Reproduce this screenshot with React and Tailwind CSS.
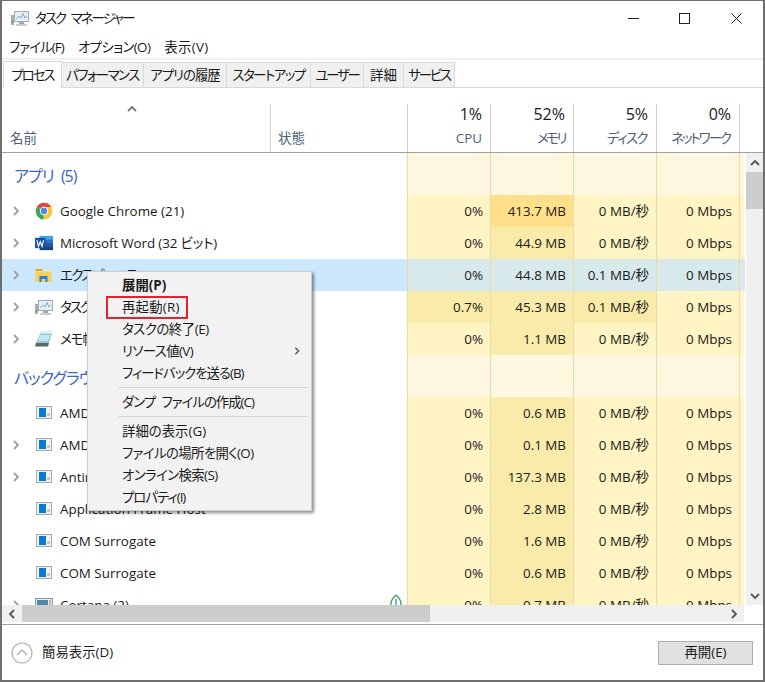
import React from 'react';

const font = '[font-family:"Open_Sans","Noto_Sans_CJK_JP",sans-serif] [font-feature-settings:"palt"]';

const heat = {
    a: 'bg-[#fff4c4]',
    b: 'bg-[#f9ecab]',
    c: 'bg-[#ffe08a]',
    s: 'bg-[#d8e9ec]',
};

const ChromeIcon = () => (
    <svg width="18" height="18" viewBox="0 0 17 17">
        <path d="M8.5 8.5 L1.6 4.8 A8 8 0 0 1 15.5 4.7 L8.5 4.7 Z" fill="#e04a3a" />
        <path d="M8.5 8.5 L8.5 4.7 L15.5 4.7 A8 8 0 0 1 8 16.5 Z" fill="#f8c73a" />
        <path d="M8.5 8.5 L8 16.5 A8 8 0 0 1 1.6 4.8 Z" fill="#3aa757" />
        <circle cx="8.5" cy="8.5" r="3.9" fill="#fff" />
        <circle cx="8.5" cy="8.5" r="3" fill="#4a88e8" />
    </svg>
);

const WordIcon = () => (
    <svg width="18" height="16" viewBox="0 0 19 17">
        <rect x="5" y="1" width="14" height="15" fill="#2b6fc4" />
        <rect x="5" y="1" width="14" height="4" fill="#41a5ee" />
        <rect x="5" y="9" width="14" height="3.5" fill="#1f57a8" />
        <rect x="5" y="12.5" width="14" height="3.5" fill="#17407f" />
        <rect x="0" y="3" width="11" height="11" fill="#1d4f9e" />
        <path d="M2 5.5 L3.6 12 L5.5 7 L7.4 12 L9 5.5" fill="none" stroke="#fff" strokeWidth="1.2" />
    </svg>
);

const FolderIcon = () => (
    <svg width="17" height="15" viewBox="0 0 16 15">
        <path d="M0 1 H6 L7.5 3 H16 V14 H0 Z" fill="#f7cf5c" />
        <rect x="0" y="1" width="7" height="2" fill="#e0a92c" />
        <rect x="0" y="3" width="16" height="1" fill="#fbe08a" />
        <rect x="4" y="8" width="8" height="6" fill="#2a7fd0" />
        <rect x="6" y="11" width="4" height="3" fill="#f7cf5c" />
    </svg>
);

const MonitorIcon = () => (
    <svg width="18" height="17" viewBox="0 0 18 17">
        <rect x="3.5" y="1.5" width="14" height="10" fill="#e6eef4" stroke="#a3a9ae" />
        <path d="M5 9 L8 6 L10 8 L12 3.5 L14 8 L16 6" fill="none" stroke="#6fb0e0" />
        <rect x="0" y="5" width="3" height="10" fill="#a9aeb2" />
        <rect x="0.5" y="11" width="2" height="2" fill="#5fb04c" />
        <rect x="8" y="12" width="5" height="2" fill="#a3a8ad" />
        <rect x="5" y="14" width="11" height="2" fill="#c9cdd0" />
    </svg>
);

const NotepadIcon = () => (
    <svg width="18" height="16" viewBox="0 0 18 16">
        <path d="M6 0.5 H17.5 L14 12 H1 Z" fill="#8fcbd9" />
        <path d="M6 0.5 H17.5 L17 2.5 H4.6 Z" fill="#f0f4f5" />
        <path d="M1 12 H14 L13 15.5 H0 Z" fill="#5c666b" />
        <path d="M5 4 H15.5 L13 10 H3 Z" fill="#c2e6ee" />
    </svg>
);

const ServiceIcon = () => (
    <svg width="16" height="14" viewBox="0 0 16 14" className="ml-px">
        <rect x="0.5" y="0.5" width="15" height="12" fill="#f2f2f2" stroke="#a9a9a9" />
        <rect x="3" y="2" width="7" height="9" fill="#0a78d7" />
        <rect x="11" y="7" width="3" height="3" fill="#c9c9c9" />
    </svg>
);

const CortanaIcon = () => (
    <svg width="18" height="14" viewBox="0 0 18 14">
        <rect x="0.5" y="0.5" width="17" height="13" fill="#eef1f3" stroke="#8a9299" />
        <rect x="2" y="2" width="11" height="11" fill="#4f8ba0" />
        <rect x="14" y="2" width="2" height="11" fill="#a9b3ba" />
    </svg>
);

const Chevron = ({ dir = 'right', className = '' }) => {
    const paths = {
        right: 'M3 1 L7 5 L3 9',
        left: 'M7 1 L3 5 L7 9',
        up: 'M1 7 L5 3 L9 7',
        down: 'M1 3 L5 7 L9 3',
    };
    return (
        <svg width="10" height="10" viewBox="0 0 10 10" className={className}>
            <path d={paths[dir]} fill="none" stroke="currentColor" strokeWidth="1.8" />
        </svg>
    );
};

const rows = [
    { type: 'group', label: 'アプリ (5)', track: 'tracking-[-1px] [word-spacing:4px]' },
    { name: 'Google Chrome (21)', icon: <ChromeIcon />, arrow: true, v: ['0%', '413.7 MB', '0 MB/秒', '0 Mbps'], h: ['a', 'c', 'a', 'a'] },
    { name: 'Microsoft Word (32 ビット)', track: 'tracking-[-0.12px]', icon: <WordIcon />, arrow: true, v: ['0%', '44.9 MB', '0 MB/秒', '0 Mbps'], h: ['a', 'b', 'a', 'a'] },
    { name: 'エクスプローラー', track: 'tracking-[-1.5px]', icon: <FolderIcon />, arrow: true, selected: true, v: ['0%', '44.8 MB', '0.1 MB/秒', '0 Mbps'], h: ['s', 's', 's', 's'] },
    { name: 'タスク マネージャー', track: 'tracking-[-1.9px] [word-spacing:4px]', icon: <MonitorIcon />, arrow: true, v: ['0.7%', '45.3 MB', '0.1 MB/秒', '0 Mbps'], h: ['b', 'b', 'b', 'a'] },
    { name: 'メモ帳', track: 'tracking-[-1px]', icon: <NotepadIcon />, arrow: true, v: ['0%', '1.1 MB', '0 MB/秒', '0 Mbps'], h: ['a', 'b', 'a', 'a'] },
    { type: 'group', label: 'バックグラウンド プロセス (60)', track: 'tracking-[-1px]' },
    { name: 'AMD External Events', icon: <ServiceIcon />, v: ['0%', '0.6 MB', '0 MB/秒', '0 Mbps'], h: ['a', 'b', 'a', 'a'] },
    { name: 'AMD External Events', icon: <ServiceIcon />, arrow: true, v: ['0%', '0.1 MB', '0 MB/秒', '0 Mbps'], h: ['a', 'b', 'a', 'a'] },
    { name: 'Antimalware Service', icon: <ServiceIcon />, arrow: true, v: ['0%', '137.3 MB', '0 MB/秒', '0 Mbps'], h: ['a', 'b', 'a', 'a'] },
    { name: 'Application Frame Host', icon: <ServiceIcon />, v: ['0%', '2.8 MB', '0 MB/秒', '0 Mbps'], h: ['a', 'b', 'a', 'a'] },
    { name: 'COM Surrogate', icon: <ServiceIcon />, v: ['0%', '1.6 MB', '0 MB/秒', '0 Mbps'], h: ['a', 'b', 'a', 'a'] },
    { name: 'COM Surrogate', icon: <ServiceIcon />, v: ['0%', '0.6 MB', '0 MB/秒', '0 Mbps'], h: ['a', 'b', 'a', 'a'] },
    { name: 'Cortana (2)', icon: <CortanaIcon />, arrow: true, leaf: true, v: ['0%', '0.7 MB', '0 MB/秒', '0 Mbps'], h: ['a', 'b', 'a', 'a'] },
];

const tabs = [
    { t: 'パフォーマンス', w: 'w-[82px]', track: 'tracking-[-1.5px]' },
    { t: 'アプリの履歴', w: 'w-[83px]', track: 'tracking-[-1px]' },
    { t: 'スタートアップ', w: 'w-[84px]', track: 'tracking-[-1.5px]' },
    { t: 'ユーザー', w: 'w-[53px]', track: 'tracking-[-2.2px]' },
    { t: '詳細', w: 'w-[40px]', track: '' },
    { t: 'サービス', w: 'w-[51px]', track: 'tracking-[-2.2px]' },
];

const heads = [
    { pct: '1%', label: 'CPU', track: '' },
    { pct: '52%', label: 'メモリ', track: 'tracking-[-2.5px]' },
    { pct: '5%', label: 'ディスク', track: 'tracking-[-1.5px] mr-px' },
    { pct: '0%', label: 'ネットワーク', track: 'tracking-[-2px] mr-px' },
];

const menuA = [
    { t: '再起動(R)', track: 'tracking-[0.2px]' },
    { t: 'タスクの終了(E)', track: 'tracking-[-0.45px]' },
    { t: 'リソース値(V)', track: 'tracking-[-0.6px]', more: true },
    { t: 'フィードバックを送る(B)', track: 'tracking-[-1px]' },
];
const menuB = [
    { t: '詳細の表示(G)', track: '' },
    { t: 'ファイルの場所を開く(O)', track: 'tracking-[-0.6px]' },
    { t: 'オンライン検索(S)', track: 'tracking-[-0.6px]' },
    { t: 'プロパティ(I)', track: 'tracking-[-1px]' },
];

const MenuItem = ({ children, bold, more, track = '' }) => (
    <div className={`h-[22px] pl-[34px] pr-[10px] flex items-center justify-between text-[13.4px] text-[#1a1a1a] ${bold ? 'font-bold' : ''}`}>
        <span className={track}>{children}</span>
        {more && <Chevron className="w-[8px] h-[8px] text-[#555]" />}
    </div>
);

const Row = ({ row }) => {
    if (row.type === 'group') {
        return (
            <div className="h-[42px] flex">
                <div className={`w-[405px] pl-[12px] pt-[11px] text-[16px] leading-[24px] text-[#3b66c4] ${row.track}`}>{row.label}</div>
                {[0, 1, 2, 3].map((i) => (
                    <div key={i} className="w-[83px] bg-[#fff7e0] border-l border-[#eed9a4]" />
                ))}
                <div className="w-[5px] bg-[#fff7e0] border-l border-[#eed9a4]" />
            </div>
        );
    }
    return (
        <div className={`h-[32px] flex items-center text-[13.4px] ${row.selected ? 'bg-[#cce8ff]' : ''}`}>
            <div className="w-[269px] h-full flex items-center">
                <div className="w-[27px] pl-[9px] text-[#a0a0a0]">{row.arrow && <Chevron />}</div>
                <div className="w-[31px] pl-[6px] flex items-center">{row.icon}</div>
                <span className={`text-[#1a1a1a] whitespace-nowrap ${row.track || ''}`}>{row.name}</span>
            </div>
            <div className="w-[136px] h-full flex justify-end items-start pr-[5px] pt-[5px]">
                {row.leaf && (
                    <svg width="12" height="14" viewBox="0 0 12 14">
                        <path d="M6 1 C2.5 4 1 7 1 10 V14 M6 1 C9.5 4 11 7 11 10 V14" fill="none" stroke="#3ca04a" strokeWidth="1.3" />
                        <path d="M6 5 V13" stroke="#2f8fc0" strokeWidth="1.3" />
                    </svg>
                )}
            </div>
            {row.v.map((val, i) => (
                <div key={i} className={`w-[83px] h-full flex items-center justify-end pr-[7px] border-l border-[#eed9a4] text-[#1a1a1a] ${heat[row.h[i]]}`}>
                    {val}
                </div>
            ))}
            <div className={`w-[5px] h-full border-l border-[#eed9a4] ${row.selected ? heat.s : heat.a}`} />
        </div>
    );
};

export default function App() {
    return (
        <div className={`${font} w-[765px] h-[682px] bg-white border-t border-l-2 border-r-2 border-b-2 border-[#6f6f6f] flex flex-col overflow-hidden`}>
            {/* title bar */}
            <div className="h-[35px] shrink-0 flex items-center">
                <div className="pl-[9px] pr-[6px]">
                    <MonitorIcon />
                </div>
                <span className="text-[13.4px] text-[#1a1a1a] tracking-[-1.9px] [word-spacing:4px]">タスク マネージャー</span>
                <div className="ml-auto flex items-center text-[#222]">
                    <div className="w-[50px] flex justify-center">
                        <div className="w-[11px] h-px bg-[#222]" />
                    </div>
                    <div className="w-[52px] flex justify-center">
                        <div className="w-[11px] h-[11px] border border-[#222]" />
                    </div>
                    <div className="w-[53px] flex justify-center">
                        <svg width="11" height="11" viewBox="0 0 11 11">
                            <path d="M0.5 0.5 L10.5 10.5 M10.5 0.5 L0.5 10.5" stroke="#222" strokeWidth="1" />
                        </svg>
                    </div>
                </div>
            </div>
            {/* menu bar */}
            <div className="h-[22px] shrink-0 flex items-center gap-[14px] pl-[7px] text-[13.4px] text-[#1a1a1a]">
                <span className="tracking-[-0.9px]">ファイル(F)</span>
                <span className="tracking-[-0.6px]">オプション(O)</span>
                <span className="tracking-[0.3px]">表示(V)</span>
            </div>
            {/* tabs */}
            <div className="h-[30px] shrink-0 border-t-2 border-[#f0f0f0] border-b border-b-[#d9d9d9] flex items-end pl-[1px]">
                <div className="w-[59px] h-[27px] -mb-px bg-white border border-b-0 border-[#d9d9d9] flex items-center justify-center text-[13.4px] text-[#1a1a1a] tracking-[-2px]">プロセス</div>
                {tabs.map((tab) => (
                    <div key={tab.t} className={`${tab.w} ${tab.track} h-[25px] bg-[#f0f0f0] border-t border-r border-[#d9d9d9] flex items-center justify-center text-[13.4px] text-[#1a1a1a] whitespace-nowrap`}>
                        {tab.t}
                    </div>
                ))}
            </div>
            {/* column headers */}
            <div className="h-[65px] shrink-0 pt-[16px] border-b border-b-[#a0a0a0]">
                <div className="h-full flex">
                    <div className="w-[269px] relative border-r border-[#d0d0d0] flex items-end pl-[8px] pb-[4px] text-[13.4px] text-[#4c607a]">
                        <Chevron dir="up" className="absolute top-0 left-[125px] text-[#777]" />
                        名前
                    </div>
                    <div className="w-[136px] flex items-end pl-[7px] pb-[4px] text-[13.4px] text-[#4c607a]">状態</div>
                    {heads.map((head) => (
                        <div key={head.label} className="w-[83px] border-l border-[#d0d0d0] flex flex-col items-end justify-between pr-[8px] pb-[4px]">
                            <span className="text-[16px] leading-[20px] text-[#1a1a1a]">{head.pct}</span>
                            <span className={`text-[13.4px] leading-[20px] text-[#4c607a] whitespace-nowrap ${head.track}`}>{head.label}</span>
                        </div>
                    ))}
                    <div className="w-px border-l border-[#d0d0d0]" />
                </div>
            </div>
            {/* process table */}
            <div className="h-[452px] shrink-0 flex relative">
                <div className="w-[743px] overflow-hidden">
                    {rows.map((row, i) => (
                        <Row key={i} row={row} />
                    ))}
                </div>
                {/* vertical scrollbar */}
                <div className="w-[17px] ml-px bg-[#f0f0f0] flex flex-col items-center text-[#555]">
                    <div className="h-[19px] flex items-center">
                        <Chevron dir="up" />
                    </div>
                    <div className="w-full h-[37px] bg-[#cdcdcd]" />
                    <div className="mt-auto h-[19px] flex items-center">
                        <Chevron dir="down" />
                    </div>
                </div>
                {/* context menu */}
                <div className="absolute left-[85px] top-[118px] w-[225px] h-[240px] bg-[#f2f2f2] border border-[#cfcfcf] shadow-[2px_2px_3px_rgba(0,0,0,0.45)] pt-[2px]">
                    <MenuItem bold>展開(P)</MenuItem>
                    {menuA.map((m) => (
                        <MenuItem key={m.t} more={m.more} track={m.track}>{m.t}</MenuItem>
                    ))}
                    <div className="h-px bg-[#d4d4d4] ml-[30px] mr-[3px] my-[3px]" />
                    <MenuItem track="tracking-[-1px] [word-spacing:4px]">ダンプ ファイルの作成(C)</MenuItem>
                    <div className="h-px bg-[#d4d4d4] ml-[30px] mr-[3px] my-[3px]" />
                    {menuB.map((m) => (
                        <MenuItem key={m.t} track={m.track}>{m.t}</MenuItem>
                    ))}
                    {/* red highlight */}
                    <div className="absolute left-[18px] top-[24px] w-[82px] h-[23px] border-2 border-[#e8202a]" />
                </div>
            </div>
            {/* horizontal scrollbar */}
            <div className="h-[17px] shrink-0 mr-[19px] bg-[#f0f0f0] flex items-center text-[#555]">
                <div className="w-[20px] flex justify-center">
                    <Chevron dir="left" />
                </div>
                <div className="w-[408px] h-full bg-[#cdcdcd]" />
                <div className="ml-auto w-[20px] flex justify-center">
                    <Chevron dir="right" />
                </div>
            </div>
            {/* footer */}
            <div className="flex-1 mt-[2px] border-t border-t-[#a0a0a0] flex items-center justify-between pl-[9px] pr-[10px]">
                <div className="flex items-center gap-[9px] text-[13.4px] text-[#1a1a1a]">
                    <svg width="22" height="22" viewBox="0 0 22 22">
                        <circle cx="11" cy="11" r="10" fill="none" stroke="#b0b0b0" strokeWidth="1.2" />
                        <path d="M6 13 L11 8 L16 13" fill="none" stroke="#b0b0b0" strokeWidth="1.4" />
                    </svg>
                    <span>簡易表示(D)</span>
                </div>
                <div className="w-[95px] h-[24px] bg-[#e1e1e1] border border-[#adadad] flex items-center justify-center text-[13.4px] text-[#1a1a1a]">再開(E)</div>
            </div>
        </div>
    );
}
